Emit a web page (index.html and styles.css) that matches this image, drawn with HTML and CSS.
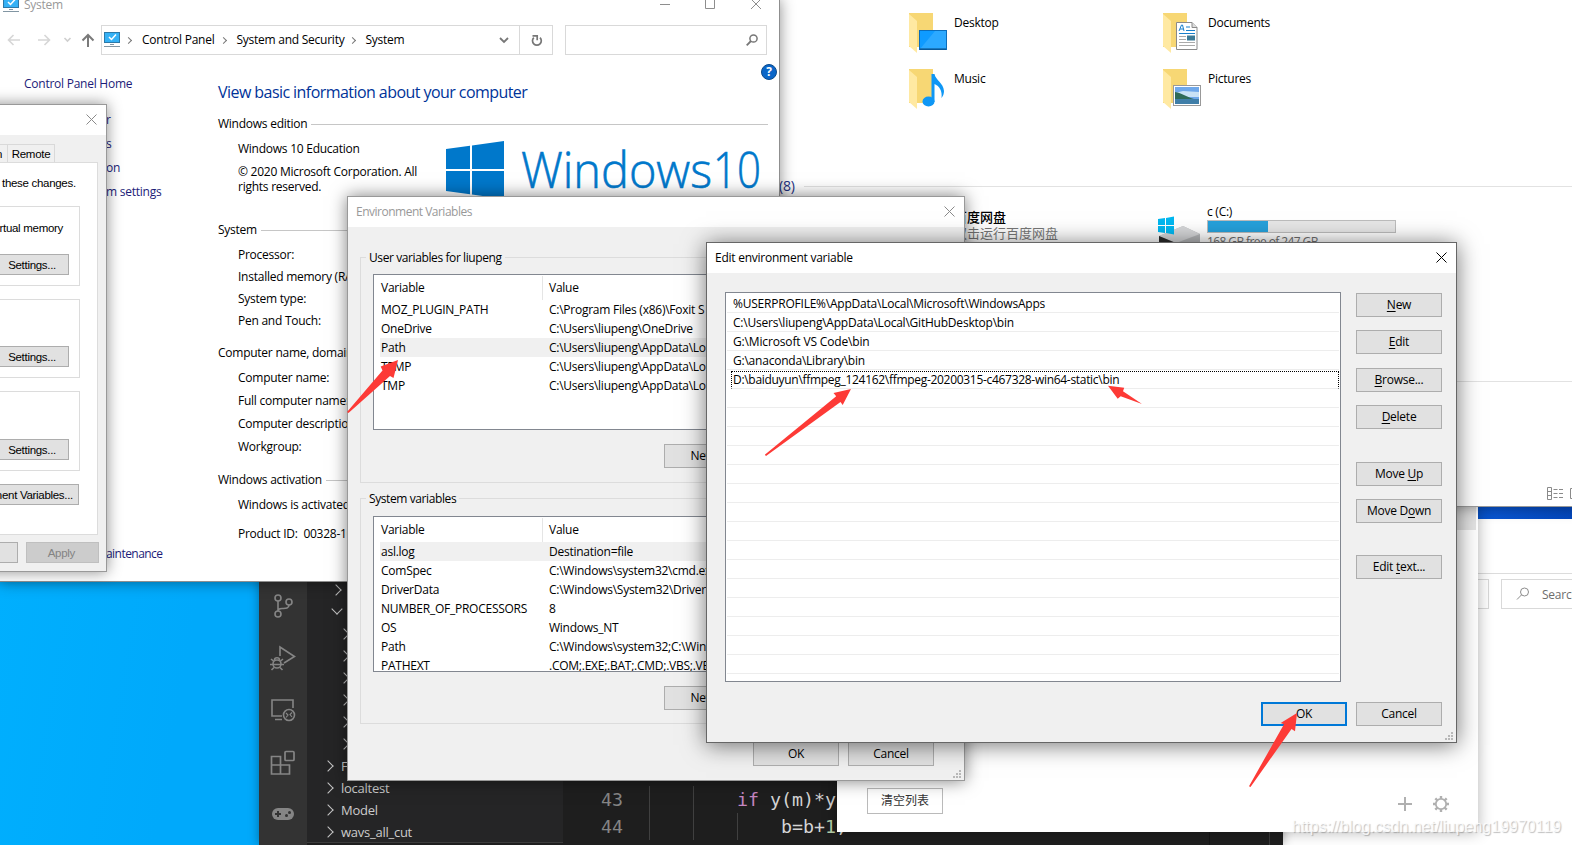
FILE: index.html
```html
<!DOCTYPE html>
<html lang="en">
<head>
  <meta charset="UTF-8">
  <title>Environment Variables</title>
  <link rel="stylesheet" href="styles.css">
</head>
<body>
<div class="desktop">

  <!-- Settings style window, bottom right -->
  <div class="window store">
    <div class="wallpaper"></div>
    <div class="store-head"></div>
    <div class="store-bar">
      <div class="store-end"></div>
      <div class="store-search">
        <svg width="14" height="14" viewBox="0 0 14 14"><circle cx="8.500" cy="5" r="4" fill="none" stroke="#8c8c8c"/><path d="M5.600 7.800L1 12.500" stroke="#8c8c8c"/></svg>
        <span>Search</span>
      </div>
    </div>
  </div>

  <!-- VS Code -->
  <div class="window vscode">
    <div class="activity">
      <svg width="24" height="24" viewBox="0 0 24 24"><g fill="none" stroke="#858585" stroke-width="1.600"><circle cx="7" cy="4" r="3"/><circle cx="18" cy="8" r="3"/><circle cx="7" cy="20" r="3"/><path d="M7 7v10M18 11c0 4-4 3.500-7 3.500-2 0-4 .5-4 2.500"/></g></svg>
      <svg width="26" height="26" viewBox="0 0 26 26"><g fill="none" stroke="#858585" stroke-width="1.600"><path d="M10 11V2l14.500 9.500L14 18"/><circle cx="7" cy="19" r="4"/><path d="M3 19.500h8M1 14l3 2.500M13 14l-3 2.500M0 19.500h3M11 19.500h3M1.500 25l2.500-2.500M12.500 25L10 22.500M4.500 15c0-3 5-3 5 0"/></g></svg>
      <svg width="26" height="26" viewBox="0 0 26 26"><g fill="none" stroke="#858585" stroke-width="1.600"><path d="M12 19H2V3h21v8M5 22.500h7"/><circle cx="19" cy="18" r="5.500"/><path d="M16 16l2 2-2 2.500M22 15.500l-2 2 2 2.500" stroke-width="1.200"/></g></svg>
      <svg width="26" height="26" viewBox="0 0 26 26"><g fill="none" stroke="#858585" stroke-width="1.700"><rect x="15" y="1.500" width="9" height="9" rx="1"/><path d="M1.500 6.500h9V15h9v9h-18zM1.500 15h9v9"/></g></svg>
      <svg width="24" height="24" viewBox="0 0 24 24"><rect x="1" y="6" width="22" height="12" rx="6" fill="#858585"/><path d="M4 12h6M7 9v6" stroke="#333" stroke-width="2"/><circle cx="15.500" cy="13.500" r="1.500" fill="#333"/><circle cx="18.500" cy="10.500" r="1.500" fill="#333"/></svg>
    </div>
    <div class="tree">
      <div class="node lvl2"><i class="chev"></i></div>
      <div class="node lvl2 open"><i class="chev"></i></div>
      <div class="node lvl3"><i class="chev"></i></div>
      <div class="node lvl3"><i class="chev"></i></div>
      <div class="node lvl3"><i class="chev"></i></div>
      <div class="node lvl3"><i class="chev"></i></div>
      <div class="node lvl3"><i class="chev"></i></div>
      <div class="node lvl3"><i class="chev"></i></div>
      <div class="node"><i class="chev"></i>F</div>
      <div class="node"><i class="chev"></i>localtest</div>
      <div class="node"><i class="chev"></i>Model</div>
      <div class="node"><i class="chev"></i>wavs_all_cut</div>
    </div>
    <div class="editor">
      <div class="line"><span class="num">43</span><span class="guide"></span><span class="guide"></span><span class="code"><b>if</b> y(m)*y</span></div>
      <div class="line"><span class="num">44</span><span class="guide"></span><span class="guide"></span><span class="guide"></span><span class="code">b=b+<em>1</em>;</span></div>
    </div>
    <div class="minimap"></div>
  </div>

  <!-- Download list -->
  <div class="window download">
    <div class="download-tab"></div>
    <div class="download-foot">
      <div class="clear-btn">清空列表</div>
      <svg class="plus" width="16" height="16" viewBox="0 0 16 16"><path d="M8 1v14M1 8h14" stroke="#b0b0b0" stroke-width="2"/></svg>
      <svg width="18" height="18" viewBox="0 0 18 18"><circle cx="9" cy="9" r="5.200" fill="none" stroke="#b0b0b0" stroke-width="1.800"/><path d="M9 1v3M9 14v3M1 9h3M14 9h3M3.300 3.300l2.200 2.200M12.500 12.500l2.200 2.200M3.300 14.700l2.200-2.200M12.500 5.500l2.200-2.200" stroke="#b0b0b0" stroke-width="2.400"/></svg>
    </div>
  </div>

  <!-- This PC -->
  <div class="window explorer">
    <div class="folders">
      <div class="folder">
        <svg width="40" height="42" viewBox="0 0 40 42"><path d="M1 0h24v34H1z" fill="#f7d774"/><path d="M1 1l8 7v32l-8-7z" fill="#ffe9a2"/><rect x="11.500" y="17.500" width="27" height="19" fill="#0f9bff" stroke="#0b6dbb"/><path d="M12 36l15-18h11v18z" fill="#2ca9ff"/><path d="M12 36h26" stroke="#06497e"/></svg>
        <span>Desktop</span>
      </div>
      <div class="folder">
        <svg width="40" height="42" viewBox="0 0 40 42"><path d="M1 0h24v34H1z" fill="#f7d774"/><path d="M1 1l8 7v32l-8-7z" fill="#ffe9a2"/><path d="M14.500 9.500H30l5 5v22H14.500z" fill="#fff" stroke="#8a8a8a"/><path d="M30 9.500v5h5" fill="#ddd" stroke="#8a8a8a"/><path d="M17 18l2.500-6h1l1.500 6M18 16h3.500M24 14h4M24 17.500h9M17 20.500h16" fill="none" stroke="#1a80cc"/><path d="M17 23.500h7M17 26.500h7M17 29.500h16M17 32.500h16" stroke="#aaa"/><rect x="25" y="22.500" width="8" height="5" fill="#3d7a96"/></svg>
        <span>Documents</span>
      </div>
      <div class="folder">
        <svg width="40" height="42" viewBox="0 0 40 42"><path d="M1 0h24v34H1z" fill="#f7d774"/><path d="M1 1l8 7v32l-8-7z" fill="#ffe9a2"/><ellipse cx="20.500" cy="32.500" rx="6" ry="5" fill="#0f97f5"/><path d="M23.500 33V5h3c1 6 9 9 9.500 17 0 3-1 5-2.500 7 1-7-2-12-7-14v18z" fill="#0f97f5"/></svg>
        <span>Music</span>
      </div>
      <div class="folder">
        <svg width="40" height="42" viewBox="0 0 40 42"><path d="M1 0h24v34H1z" fill="#f7d774"/><path d="M1 1l8 7v32l-8-7z" fill="#ffe9a2"/><rect x="11.500" y="16.500" width="27" height="20" fill="#fff" stroke="#999"/><rect x="13" y="18" width="24" height="17" fill="#6fa8ea"/><path d="M13 24l8-2 16 1v5H13z" fill="#c9e2f5"/><path d="M13 23c7 1 12 5 19 7H13z" fill="#2f6b58"/><path d="M13 30h24v5H13z" fill="#3f7ea8"/></svg>
        <span>Pictures</span>
      </div>
    </div>
    <div class="devices-head"><span>(8)</span><hr></div>
    <div class="devices">
      <div class="baidu">
        <div class="baidu-name">百度网盘</div>
        <div class="baidu-sub">双击运行百度网盘</div>
      </div>
      <svg class="drive" width="44" height="32" viewBox="0 0 44 32"><path d="M2 20l24-10 17 8v9l-24 9-17-8z" fill="#b4b6b8"/><path d="M2 20l24-10 17 8-24 9z" fill="#d6d7d9"/><path d="M2 20l17 7v9L2 28z" fill="#2b2b2b"/><path d="M1 3l7-1v7H1zM9 2l8-1.500V9H9zM1 10h7v7l-7-1zM9 10h8v8.500L9 17z" fill="#00b7f0"/><circle cx="16" cy="29" r="1.200" fill="#3c3"/></svg>
      <div class="disk">
        <div>c (C:)</div>
        <div class="meter"><div class="meter-fill" style="width:32%"></div></div>
        <div class="free">168 GB free of 247 GB</div>
      </div>
    </div>
    <hr class="pane-line">
    <div class="view-icons">
      <svg width="26" height="14" viewBox="0 0 26 14"><g fill="none" stroke="#8a8a8a"><path d="M.5 .5h4v12h-4zM.5 4.500h4M.5 8.500h4M6.500 2.500h4M12 2.500h4M6.500 6.500h4M12 6.500h4M6.500 10.500h4M12 10.500h4M26 1.500h-2.500v10H26"/></g></svg>
    </div>
  </div>

  <!-- Control Panel \ System -->
  <div class="window system">
    <div class="system-title">
      <svg width="17" height="16" viewBox="0 0 17 16"><rect x=".5" y=".5" width="15" height="10" fill="#35b1f5" stroke="#2c79a8"/><path d="M5 5l2.500 2.500L12 2.500" fill="none" stroke="#fff" stroke-width="1.500"/><path d="M6 12.500h4M0 14.500h16" stroke="#8296a3"/></svg>
      <span>System</span>
      <svg class="ctrl" width="104" height="12" viewBox="0 0 104 12"><path d="M0 4.500h10M45.500-3v11.500h9V-3M91-1l10 10M101-1L91 9" fill="none" stroke="#8e8e8e"/></svg>
    </div>
    <div class="navbar">
      <svg class="nav-arrows" width="100" height="30" viewBox="0 0 100 30"><g fill="none" stroke-width="1.600"><path d="M20 15H9M13.500 10L8.500 15l5 5M38 15h11M44.500 10l5 5-5 5" stroke="#d6d6d6"/><path d="M64.500 13l3 3 3-3" stroke="#cfcfcf"/><path d="M88 22V11M82.500 15.500L88 10l5.500 5.500" stroke="#7a7a7a" stroke-width="2"/></g></svg>
      <div class="address">
        <svg width="17" height="16" viewBox="0 0 17 16"><rect x=".5" y=".5" width="15" height="10" fill="#35b1f5" stroke="#2c79a8"/><path d="M5 5l2.500 2.500L12 2.500" fill="none" stroke="#fff" stroke-width="1.500"/><path d="M6 12.500h4M0 14.500h16" stroke="#8296a3"/></svg>
        <i class="sep"></i><span class="c1">Control Panel</span>
        <i class="sep"></i><span class="c2">System and Security</span>
        <i class="sep"></i><span>System</span>
        <svg class="drop" width="10" height="8" viewBox="0 0 10 8"><path d="M1 2l4 4 4-4" fill="none" stroke="#777" stroke-width="1.800"/></svg>
        <div class="refresh"><svg width="12" height="13" viewBox="0 0 12 13"><path d="M2.800 3.600A4.400 4.400 0 1 0 9 3.600M1.500 1.800h4.700v4.500" fill="none" stroke="#777" stroke-width="1.700"/></svg></div>
      </div>
      <div class="searchbox"><svg width="12" height="12" viewBox="0 0 12 12"><circle cx="7.500" cy="4.500" r="3.600" fill="none" stroke="#777" stroke-width="1.500"/><path d="M5 7l-4.300 4.300" stroke="#777" stroke-width="1.800"/></svg></div>
    </div>
    <div class="system-body">
      <div class="side">
        <div class="side-home">Control Panel Home</div>
        <div class="side-link">r</div>
        <div class="side-link">s</div>
        <div class="side-link">on</div>
        <div class="side-link">m settings</div>
        <div class="side-link last">aintenance</div>
      </div>
      <div class="info">
        <h1>View basic information about your computer</h1>
        <div class="legend"><span>Windows edition</span><hr></div>
        <div class="edition">
          <div class="edition-text">
            <p>Windows 10 Education</p>
            <p class="copy">© 2020 Microsoft Corporation. All rights reserved.</p>
          </div>
          <svg class="winlogo" width="320" height="64" viewBox="0 0 320 64"><path d="M0 8l24-3.300V28H0zM26 4.400L58 0v28H26zM0 30h24v23.300L0 50zM26 30h32v28l-32-4.400z" fill="#0078cb"/><text x="75" y="47" textLength="191" lengthAdjust="spacingAndGlyphs">Windows</text><text x="267" y="47" textLength="48" lengthAdjust="spacingAndGlyphs">10</text></svg>
        </div>
        <div class="legend"><span>System</span><hr></div>
        <div class="rows sys">
          <div>Processor:</div>
          <div>Installed memory (RAM):</div>
          <div>System type:</div>
          <div>Pen and Touch:</div>
        </div>
        <div class="legend"><span>Computer name, domain,</span><hr></div>
        <div class="rows comp">
          <div>Computer name:</div>
          <div>Full computer name:</div>
          <div>Computer description:</div>
          <div>Workgroup:</div>
        </div>
        <div class="legend"><span>Windows activation</span><hr></div>
        <div class="rows act">
          <div>Windows is activated</div>
          <div>Product ID:&nbsp; 00328-10</div>
        </div>
      </div>
      <div class="help">?</div>
    </div>
  </div>

  <!-- System Properties -->
  <div class="window props">
    <div class="props-title"><svg width="11" height="11" viewBox="0 0 11 11"><path d="M.5 .5l10 10M10.500 .5l-10 10" stroke="#8a8a8a"/></svg></div>
    <div class="tabs"><span class="tab cut">n</span><span class="tab">Remote</span></div>
    <div class="panel">
      <div class="hint">these changes.</div>
      <div class="box"><span>virtual memory</span><div class="pbtn">Settings...</div></div>
      <div class="box"><div class="pbtn">Settings...</div></div>
      <div class="box"><div class="pbtn">Settings...</div></div>
      <div class="pbtn env-btn">nent Variables...</div>
    </div>
    <div class="props-foot"><div class="pbtn"></div><div class="pbtn off">Apply</div></div>
  </div>

  <!-- Environment Variables -->
  <div class="window env">
    <div class="title"><span>Environment Variables</span><svg width="11" height="11" viewBox="0 0 11 11"><path d="M.5 .5l10 10M10.500 .5l-10 10" stroke="#8a8a8a"/></svg></div>
    <fieldset class="group first">
      <legend>User variables for liupeng</legend>
      <div class="table">
        <div class="tr th"><span>Variable</span><span>Value</span></div>
        <div class="tr"><span>MOZ_PLUGIN_PATH</span><span>C:\Program Files (x86)\Foxit S</span></div>
        <div class="tr"><span>OneDrive</span><span>C:\Users\liupeng\OneDrive</span></div>
        <div class="tr on"><span>Path</span><span>C:\Users\liupeng\AppData\Lo</span></div>
        <div class="tr"><span>TEMP</span><span>C:\Users\liupeng\AppData\Lo</span></div>
        <div class="tr"><span>TMP</span><span>C:\Users\liupeng\AppData\Lo</span></div>
      </div>
      <div class="btn">New...</div>
    </fieldset>
    <fieldset class="group second">
      <legend>System variables</legend>
      <div class="table">
        <div class="tr th"><span>Variable</span><span>Value</span></div>
        <div class="tr on"><span>asl.log</span><span>Destination=file</span></div>
        <div class="tr"><span>ComSpec</span><span>C:\Windows\system32\cmd.exe</span></div>
        <div class="tr"><span>DriverData</span><span>C:\Windows\System32\Drivers</span></div>
        <div class="tr"><span>NUMBER_OF_PROCESSORS</span><span>8</span></div>
        <div class="tr"><span>OS</span><span>Windows_NT</span></div>
        <div class="tr"><span>Path</span><span>C:\Windows\system32;C:\Win</span></div>
        <div class="tr"><span>PATHEXT</span><span>.COM;.EXE;.BAT;.CMD;.VBS;.VB</span></div>
      </div>
      <div class="btn">New...</div>
    </fieldset>
    <div class="env-foot"><div class="btn">OK</div><div class="btn">Cancel</div></div>
    <svg class="grip" width="8" height="8" viewBox="0 0 8 8"><path d="M6 0h2v2H6zM3 3h2v2H3zM6 3h2v2H6zM0 6h2v2H0zM3 6h2v2H3zM6 6h2v2H6z" fill="#b8b8b8"/></svg>
  </div>

  <!-- Edit environment variable -->
  <div class="window edit">
    <div class="title"><span>Edit environment variable</span><svg width="11" height="11" viewBox="0 0 11 11"><path d="M.5 .5l10 10M10.500 .5l-10 10" stroke="#000"/></svg></div>
    <div class="edit-body">
      <div class="list">
        <div class="item">%USERPROFILE%\AppData\Local\Microsoft\WindowsApps</div>
        <div class="item">C:\Users\liupeng\AppData\Local\GitHubDesktop\bin</div>
        <div class="item short">G:\Microsoft VS Code\bin</div>
        <div class="item">G:\anaconda\Library\bin</div>
        <div class="item focus">D:\baiduyun\ffmpeg_124162\ffmpeg-20200315-c467328-win64-static\bin</div>
        <div class="item"></div>
        <div class="item"></div>
        <div class="item"></div>
        <div class="item"></div>
        <div class="item"></div>
        <div class="item"></div>
        <div class="item"></div>
        <div class="item"></div>
        <div class="item"></div>
        <div class="item"></div>
        <div class="item"></div>
        <div class="item"></div>
        <div class="item"></div>
        <div class="item"></div>
        <div class="item"></div>
      </div>
      <div class="side-btns">
        <div class="btn"><u>N</u>ew</div>
        <div class="btn m13"><u>E</u>dit</div>
        <div class="btn m14"><u>B</u>rowse...</div>
        <div class="btn m13"><u>D</u>elete</div>
        <div class="btn m33">Move <u>U</u>p</div>
        <div class="btn m13">Move D<u>o</u>wn</div>
        <div class="btn m32">Edit <u>t</u>ext...</div>
      </div>
    </div>
    <div class="edit-foot"><div class="btn primary">OK</div><div class="btn">Cancel</div></div>
    <svg class="grip" width="8" height="8" viewBox="0 0 8 8"><path d="M6 0h2v2H6zM3 3h2v2H3zM6 3h2v2H6zM0 6h2v2H0zM3 6h2v2H3zM6 6h2v2H6z" fill="#b8b8b8"/></svg>
  </div>

  <!-- Red arrows -->
  <svg class="arrows" width="1572" height="845" viewBox="0 0 1572 845">
    <g fill="#fd3a36">
      <path d="M347 412L382.500 370.500 380.700 366.500 398 360 393.500 378 390 376 348.500 413Z"/>
      <path d="M764.800 454.800L836.200 396.200 833.500 393 851 389 842.700 405 840.500 402 766 456Z"/>
      <path d="M1108 385.800L1124.200 387.800 1123 391.200 1142 404 1120.700 396.300 1117.700 398.800Z"/>
      <path d="M1249 786.200L1284 724.200 1280.700 723 1297 713 1295 731.300 1291.500 729 1250.500 787Z"/>
    </g>
  </svg>

  <div class="watermark">https://blog.csdn.net/liupeng19970119</div>
</div>
</body>
</html>
```

FILE: styles.css
```css
* {
  box-sizing: border-box;
}

body {
  margin: 0;
  font-family: "Open Sans", "Noto Sans", "Noto Sans CJK SC", sans-serif;
  font-size: 12px;
  letter-spacing: -0.25px;
  color: #000;
}

svg {
  display: block;
  flex: none;
}

hr {
  flex: 1;
  margin: 0;
  border: 0;
  border-top: 1px solid #c6c6c6;
}

.desktop {
  position: relative;
  width: 1572px;
  height: 845px;
  overflow: hidden;
  background: linear-gradient(100deg, #00b2ff 0, #00a9fb 300px);
  white-space: nowrap;
}

.window {
  position: absolute;
  overflow: hidden;
  background: #fff;
}

/* Bottom right window */
.store {
  left: 1283px;
  top: 500px;
  width: 289px;
  height: 345px;
}

.wallpaper {
  height: 19px;
  background: linear-gradient(90deg, #0a58d4 195px, #0448bd);
}

.store-head {
  height: 55px;
  border-bottom: 1px solid #dcdcdc;
}

.store-bar {
  display: flex;
  padding-top: 5px;
}

.store-end {
  flex: none;
  width: 206px;
  height: 30px;
  border: 1px solid #d9d9d9;
}

.store-search {
  flex: none;
  display: flex;
  align-items: center;
  gap: 12px;
  width: 90px;
  height: 30px;
  margin-left: 12px;
  padding-left: 14px;
  border: 1px solid #d9d9d9;
  color: #6d6d6d;
}

/* VS Code */
.vscode {
  left: 259px;
  top: 570px;
  width: 1024px;
  height: 275px;
  display: flex;
  background: #1e1e1e;
  box-shadow: 0 0 10px rgba(0,0,0,0.35);
}

.activity {
  width: 48px;
  height: 275px;
  padding-top: 24px;
  display: flex;
  flex-direction: column;
  align-items: center;
  gap: 26.5px;
  background: #333;
}

.tree {
  width: 256px;
  height: 273px;
  padding-top: 9px;
  background: #252526;
  border-bottom: 1px solid #3c3c3c;
  color: #ccc;
  font-size: 13px;
}

.node {
  display: flex;
  align-items: center;
  height: 22px;
  padding-left: 17px;
}

.lvl2 {
  padding-left: 25px;
}

.lvl3 {
  padding-left: 33px;
}

.chev {
  width: 8px;
  height: 8px;
  margin-right: 9px;
  border: solid #c5c5c5;
  border-width: 1px 1px 0 0;
  transform: rotate(45deg);
}

.open .chev {
  transform: translate(1px, -3px) rotate(135deg);
}

.editor {
  width: 646px;
  padding-top: 216px;
  font-family: "DejaVu Sans Mono", "Liberation Mono", monospace;
  font-size: 18.3px;
  letter-spacing: 0;
  color: #d4d4d4;
}

.line {
  display: flex;
  height: 27px;
  line-height: 28px;
}

.num {
  width: 86px;
  padding-left: 38px;
  color: #858585;
}

.guide {
  width: 44px;
  border-left: 1px solid #404040;
}

.code b {
  color: #c586c0;
  font-weight: normal;
}

.code em {
  color: #b5cea8;
  font-style: normal;
}

.minimap {
  width: 61px;
  border-left: 1px solid #151515;
  border-right: 1px solid #3a3a3a;
}

/* Download list */
.download {
  left: 837px;
  top: 500px;
  width: 641px;
  height: 332px;
  box-shadow: 0 0 14px rgba(0,0,0,0.3);
}

.download-tab {
  height: 30px;
  margin-right: 2px;
  background: #e4e4e4;
}

.download-foot {
  display: flex;
  align-items: center;
  margin-top: 258px;
  padding: 0 28px 0 30px;
}

.download-foot svg {
  margin-top: 6px;
}

.clear-btn {
  width: 76px;
  height: 26px;
  margin-right: auto;
  border: 1px solid #bababa;
  line-height: 24px;
  text-align: center;
  letter-spacing: 0;
  color: #333;
}

.plus {
  margin-right: 19px;
}

/* This PC */
.explorer {
  left: 770px;
  top: -10px;
  width: 810px;
  height: 517px;
  padding-top: 23px;
  border-bottom: 1px solid #999;
  box-shadow: 0 0 14px rgba(0,0,0,0.4);
}

.folders {
  display: grid;
  grid-template-columns: 254px 254px;
  grid-auto-rows: 56px;
  padding-left: 138px;
}

.folder {
  display: flex;
  gap: 6px;
  line-height: 20px;
}

.devices-head {
  display: flex;
  align-items: center;
  gap: 9px;
  height: 18px;
  margin-top: 52px;
  padding-left: 9px;
  font-size: 14px;
  color: #1e3287;
}

.devices-head span {
  margin-top: -2px;
}

.devices-head hr,
.pane-line {
  border-color: #e2e2e2;
}

.devices {
  display: flex;
  height: 50px;
  margin-top: 8px;
}

.baidu {
  width: 387px;
  padding: 6px 0 0 184px;
  letter-spacing: 0;
  line-height: 16px;
}

.baidu-name {
  font-size: 13px;
  font-weight: 500;
}

.baidu-sub {
  font-size: 13px;
  color: #777;
}

.drive {
  margin-top: 13px;
}

.disk {
  width: 189px;
  margin-left: 6px;
  line-height: 17px;
}

.meter {
  height: 13px;
  background: #e6e6e6;
  border: 1px solid #bcbcbc;
}

.meter-fill {
  height: 11px;
  background: #26a0da;
}

.free {
  letter-spacing: -0.6px;
  color: #6d6d6d;
}

.pane-line {
  margin-top: 128px;
}

.view-icons {
  margin: 105px 0 0 777px;
}

/* System window */
.system {
  left: -1px;
  top: -1px;
  width: 781px;
  height: 583px;
  border: 1px solid #8f8f8f;
  box-shadow: 0 0 14px rgba(0,0,0,0.45);
}

.system-title {
  display: flex;
  height: 25px;
  padding-left: 3px;
  color: #999;
}

.system-title span {
  margin: -4px 0 0 4px;
}

.system-title svg {
  margin-top: -3px;
}

.system-title .ctrl {
  margin: 0 15px 0 auto;
}

.navbar {
  display: flex;
  height: 30px;
}

.nav-arrows {
  margin-right: 1px;
}

.address {
  display: flex;
  align-items: center;
  width: 452px;
  height: 30px;
  padding-left: 2px;
  border: 1px solid #d9d9d9;
  line-height: 20px;
}

.address span {
  margin-top: -1px;
}

.sep {
  flex: none;
  width: 5px;
  height: 5px;
  margin: 0 11px 0 5px;
  border: solid #777;
  border-width: 1.5px 1.5px 0 0;
  transform: rotate(45deg);
}

.c1 {
  width: 73.5px;
}

.c2 {
  width: 108px;
}

.drop {
  margin-left: auto;
}

.refresh {
  display: flex;
  align-items: center;
  justify-content: center;
  width: 33px;
  height: 28px;
  margin-left: 10px;
  padding-left: 2px;
  border-left: 1px solid #d9d9d9;
}

.searchbox {
  display: flex;
  align-items: center;
  justify-content: flex-end;
  width: 202px;
  margin-left: 12px;
  padding-right: 8px;
  border: 1px solid #d9d9d9;
}

.system-body {
  display: flex;
}

.side {
  flex: none;
  width: 218px;
  padding-top: 18px;
  color: #1c1c78;
}

.side-home {
  height: 35px;
  padding-left: 24px;
  line-height: 22px;
}

.side-link {
  height: 24px;
  padding-left: 106px;
  line-height: 24px;
}

.last {
  margin-top: 338px;
  letter-spacing: -0.55px;
}

.info {
  flex: none;
  width: 536px;
  padding-top: 27px;
}

h1 {
  margin: 0 0 12px;
  font-size: 16px;
  font-weight: normal;
  letter-spacing: -0.56px;
  line-height: 21px;
  height: 22px;
  color: #039;
}

.legend {
  display: flex;
  align-items: center;
  gap: 4px;
  width: 550px;
  height: 16px;
}

.legend span {
  margin-top: -2px;
}

.legend hr {
  margin-top: 1px;
}

.edition {
  display: flex;
  height: 90px;
  padding: 9px 0 0 20px;
}

.edition-text {
  flex: none;
  width: 208px;
  white-space: normal;
}

.edition-text p {
  margin: 0;
  line-height: 16px;
}

.edition-text .copy {
  width: 190px;
  margin-top: 7px;
  line-height: 15px;
}

.winlogo text {
  font-size: 49px;
  font-weight: 300;
  letter-spacing: 0;
  fill: #0078cb;
  stroke: #0078cb;
  stroke-width: 0.6px;
}

.rows {
  padding-left: 20px;
}

.sys {
  margin: 6px 0 13px;
  line-height: 22px;
}

.comp {
  margin: 5px 0 14px;
  line-height: 23px;
}

.act {
  padding-top: 9px;
  line-height: 16px;
}

.act div {
  margin-bottom: 13px;
}

.help {
  flex: none;
  width: 16px;
  height: 16px;
  margin: 9px 0 0 7px;
  border: 1px solid #0b4a8c;
  border-radius: 50%;
  background: #0a66c8;
  color: #fff;
  font-weight: bold;
  line-height: 14px;
  text-align: center;
}

/* System Properties */
.props {
  left: -20px;
  top: 104px;
  width: 127px;
  height: 468px;
  padding-left: 19px;
  background: #f0f0f0;
  border: 1px solid #999;
  box-shadow: 0 0 14px rgba(0,0,0,0.45);
  font-family: "Liberation Sans", Arial, sans-serif;
  font-size: 11.5px;
  letter-spacing: -0.3px;
}

.props-title {
  height: 30px;
  padding: 9px 0 0 86px;
  background: #fff;
}

.tabs {
  display: flex;
  padding-top: 9px;
}

.tab {
  width: 47px;
  height: 18px;
  border: solid #d9d9d9;
  border-width: 1px 1px 0 0;
  line-height: 18px;
  text-align: center;
}

.cut {
  width: 8px;
  text-align: left;
  text-indent: -4px;
}

.panel {
  width: 98px;
  height: 373px;
  background: #fff;
  border: solid #dcdcdc;
  border-width: 1px 1px 1px 0;
}

.hint {
  height: 43px;
  padding: 14px 0 0 2px;
}

.box {
  display: flex;
  flex-direction: column;
  align-items: flex-end;
  justify-content: flex-end;
  width: 80px;
  height: 79.5px;
  margin-bottom: 13px;
  padding: 0 10px 10px 0;
  border: solid #dcdcdc;
  border-width: 1px 1px 1px 0;
}

.box span {
  margin: 0 6px 20px 0;
}

.pbtn {
  width: 80px;
  height: 21px;
  padding-right: 12px;
  background: #e1e1e1;
  border: 1px solid #adadad;
  line-height: 20px;
  text-align: right;
  flex: none;
}

.env-btn {
  width: 99px;
  margin: 2px 0 0 -20px;
  padding-right: 5px;
}

.props-foot {
  display: flex;
  gap: 8px;
  margin: 7px 0 0 -62px;
}

.off {
  width: 73px;
  padding-right: 23px;
  background: #ccc;
  border-color: #bfbfbf;
  color: #838383;
}

/* Dialogs */
.title {
  display: flex;
  align-items: center;
  justify-content: space-between;
  height: 30px;
  padding: 0 9px 2px 8px;
  background: #fff;
}

.btn {
  width: 86px;
  height: 24px;
  background: #e1e1e1;
  border: 1px solid #adadad;
  line-height: 22px;
  text-align: center;
}

u {
  text-underline-offset: 2px;
}

.grip {
  position: absolute;
  right: 3px;
  bottom: 2px;
}

.env {
  left: 347px;
  top: 196px;
  width: 618px;
  height: 585px;
  background: #f0f0f0;
  border: 1px solid #999;
  box-shadow: 0 0 16px rgba(0,0,0,0.5);
}

.env .title {
  letter-spacing: -0.5px;
  color: #999;
}

.group {
  width: 592px;
  height: 234px;
  margin: 0 0 7px 12px;
  padding: 0 12px;
  border: 1px solid #dcdcdc;
}

.first {
  margin-top: 22px;
}

.group legend {
  margin-left: -7px;
  padding: 0 3px;
  letter-spacing: -0.4px;
  line-height: 17px;
}

.table {
  width: 566px;
  height: 156px;
  margin-top: 8px;
  padding: 1px 0 0 6px;
  overflow: hidden;
  background: #fff;
  border: 1px solid #828790;
}

.second .table {
  margin-top: 9px;
}

.tr {
  display: flex;
  height: 19px;
  line-height: 19px;
}

.tr span {
  width: 168px;
  padding-left: 1px;
}

.tr span + span {
  flex: 1;
}

.th {
  height: 24px;
  line-height: 24px;
}

.th span {
  border-right: 1px solid #e5e5e5;
  width: 163px;
  margin-right: 5px;
}

.on {
  background: #f0f0f0;
}

.group .btn {
  margin: 14px 0 0 291px;
}

.env-foot {
  display: flex;
  gap: 9px;
  margin: 18px 0 0 405px;
}

.edit {
  left: 706px;
  top: 242px;
  width: 751px;
  height: 501px;
  background: #f0f0f0;
  border: 1px solid #666;
  box-shadow: 0 2px 22px rgba(0,0,0,0.55);
}

.edit-body {
  display: flex;
  padding: 19px 0 0 18px;
}

.list {
  width: 616px;
  height: 390px;
  padding: 1px;
  background: #fff;
  border: 1px solid #828790;
}

.item {
  height: 19px;
  padding-left: 6px;
  border-bottom: 1px solid #ededed;
  letter-spacing: -0.22px;
  line-height: 19px;
}

.short {
  letter-spacing: -0.15px;
}

.focus {
  height: 18px;
  margin: 1px 0 0 4px;
  padding-left: 1px;
  border: 1px dotted #000;
  border-bottom: 1px solid #ededed;
  letter-spacing: -0.3px;
  line-height: 16px;
}

.side-btns {
  padding: 1px 0 0 15px;
}

.m13 {
  margin-top: 13px;
}

.m14 {
  margin-top: 14px;
}

.m32 {
  margin-top: 32px;
}

.m33 {
  margin-top: 33px;
}

.edit-foot {
  display: flex;
  gap: 9px;
  margin: 20px 0 0 554px;
}

.primary {
  border: 2px solid #0078d7;
  line-height: 20px;
}

.arrows {
  position: absolute;
  left: 0;
  top: 0;
}

.watermark {
  position: absolute;
  left: 1292px;
  top: 817px;
  font-family: "Liberation Sans", Arial, sans-serif;
  font-size: 16px;
  letter-spacing: 0;
  line-height: 20px;
  color: rgba(255,255,255,0.8);
  text-shadow: 1px 1px 1px rgba(0,0,0,0.25);
}
```
